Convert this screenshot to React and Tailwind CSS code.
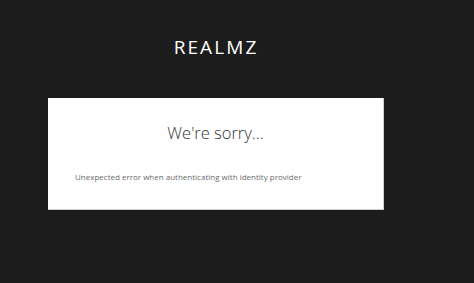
import React from 'react';

const App = () => {
  return (
    <div className="w-[474px] h-[283px] bg-[#1c1c1c] overflow-hidden" style={{ fontFamily: '"Open Sans", "Liberation Sans", sans-serif' }}>
      <div className="ml-[48px] w-[336px]">
        {/* Header */}
        <div className="pt-[35px] h-[98px] text-center">
          <h1 className="text-[19px] leading-[24px] tracking-[0.11em] text-white font-normal">REALMZ</h1>
        </div>

        {/* Card */}
        <div className="bg-white h-[112px] border-r border-b border-[#cfcfcf] px-[27px]">
          <h2 className="pt-[24px] text-center text-[16.5px] leading-[22px] font-light text-[#333]">
            We're sorry...
          </h2>
          <p className="mt-[27px] text-[8px] leading-[12px] text-[#6b6b6b]">
            Unexpected error when authenticating with identity provider
          </p>
        </div>
      </div>
    </div>
  );
};

export default App;
